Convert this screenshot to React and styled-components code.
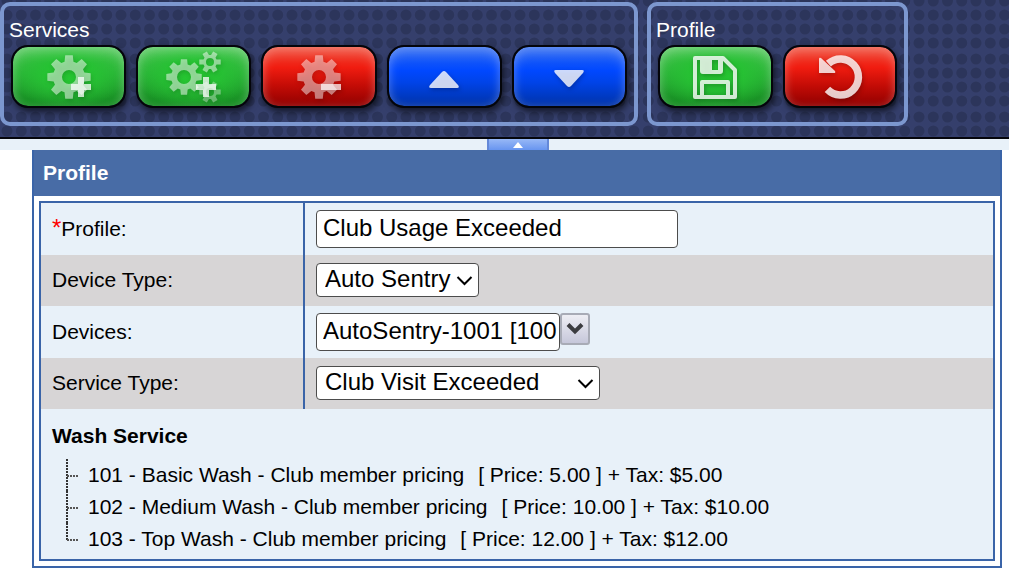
import React from "react";
import styled, { createGlobalStyle } from "styled-components";

const GlobalStyle = createGlobalStyle`
  * { box-sizing: border-box; }
  body {
    margin: 0;
    background: #fff;
    color: #000;
    font: 21px/24px "Liberation Sans", Arial, sans-serif;
  }
`;

const Toolbar = styled.header`
  position: relative;
  display: flex;
  align-items: flex-start;
  gap: 9px;
  height: 139px;
  padding-top: 2px;
  background: #353f6c;
  border-bottom: 2px solid #05060c;
  overflow: hidden;
`;

const Texture = styled.svg`
  position: absolute;
  inset: 0;
  width: 100%;
  height: 100%;
`;

const Group = styled.section`
  position: relative;
  width: ${(p) => p.$width};
  height: 124px;
  padding: 12px 7px 0 5px;
  border: 4px solid #7c97cf;
  border-radius: 10px;
`;

const GroupTitle = styled.h2`
  margin: 0;
  font-size: 21px;
  font-weight: 400;
  line-height: 24px;
  color: #fff;
`;

const Buttons = styled.div`
  display: grid;
  grid-template-columns: repeat(${(p) => p.$count}, 1fr);
  gap: 10px;
  margin-top: 3px;
  padding-left: 2px;
`;

const tones = {
  green: "radial-gradient(ellipse at 50% 45%, #25c630 0, #26c233 30%, transparent 75%), linear-gradient(#49c652, #2bb238 45%, #148a20)",
  red: "linear-gradient(#f04a36, #f01c10 35%, #c40c06 65%, #900000)",
  blue: "linear-gradient(#2c68f0, #0048ff 40%, #0043e8 60%, #0033a8)",
};

const ToolButton = styled.button`
  display: flex;
  align-items: center;
  justify-content: center;
  height: 63px;
  padding: 0;
  border: 2px solid #04050a;
  border-radius: 17px;
  background: ${(p) => tones[p.$tone]};
  background-clip: padding-box;
  background-color: #04050a;
  box-shadow: inset 0 6px 12px rgba(255, 255, 255, 0.22), inset 0 0 8px rgba(255, 255, 255, 0.14), 2px 4px 6px rgba(0, 0, 0, 0.6);
  cursor: pointer;
`;

const Icon = styled.svg`
  display: block;
  width: 60px;
  height: 56px;
  overflow: visible;
  filter: drop-shadow(1px 2px 2px rgba(0, 0, 0, 0.3));
`;

const Strip = styled.div`
  display: flex;
  justify-content: center;
  height: 11px;
  padding-left: 27px;
  background: #e8f1f9;
`;

const Handle = styled.button`
  display: flex;
  align-items: center;
  justify-content: center;
  width: 62px;
  height: 11px;
  padding: 0;
  border: solid #6488d8;
  border-width: 0 2px;
  background: linear-gradient(#98b8f6, #6895f0);
  cursor: pointer;
`;

const Panel = styled.section`
  margin: 0 7px 6px 32px;
  border: 2px solid #3a64a8;
  border-top: 0;
`;

const PanelTitle = styled.h1`
  margin: 0;
  padding: 11px 9px;
  background: #486ca6;
  color: #fff;
  font-size: 21px;
  font-weight: 700;
  line-height: 24px;
`;

const PanelBody = styled.div`
  margin: 5px;
  border: 2px solid #3a64a8;
  background: #e8f1f9;
`;

const Fields = styled.table`
  width: 100%;
  height: 206px;
  border-collapse: separate;
  border-spacing: 0;
`;

const FieldRow = styled.tr`
  height: 51px;
  background: #e8f1f9;
  &:nth-child(even) { background: #d7d5d6; }
`;

const FieldLabel = styled.th`
  width: 264px;
  padding: 0 11px;
  border-right: 2px solid #3a64a8;
  font-weight: 400;
  text-align: left;
`;

const Required = styled.span`
  color: #f00;
  font-size: 24px;
  line-height: 20px;
`;

const FieldCell = styled.td`
  padding: 0 11px;
`;

const Control = styled.div`
  position: relative;
  display: flex;
  align-items: flex-start;
  width: ${(p) => p.$width};
`;

const TextInput = styled.input`
  width: ${(p) => p.$width};
  height: 38px;
  padding: 0 0 2px 6px;
  border: 1px solid #4c4c4c;
  border-radius: 4px;
  background: #fff;
  color: #000;
  font: 24px/28px "Liberation Sans", Arial, sans-serif;
`;

const Select = styled.select`
  appearance: none;
  width: 100%;
  height: 34px;
  padding: 0 8px 2px;
  border: 1px solid #4c4c4c;
  border-radius: 4px;
  background: #fff;
  color: #000;
  font: 24px/28px "Liberation Sans", Arial, sans-serif;
`;

const Chevron = styled.svg`
  position: absolute;
  right: 6px;
  top: 12px;
  width: 17px;
  height: 11px;
  pointer-events: none;
`;

const PickerButton = styled.button`
  display: flex;
  align-items: center;
  justify-content: center;
  width: 30px;
  height: 32px;
  padding: 0;
  border: 2px solid #a8abb6;
  border-radius: 3px;
  background: linear-gradient(#eeeef4, #c6c7da);
  cursor: pointer;
`;

const Services = styled.section`
  padding: 15px 11px 4px;
`;

const ServicesTitle = styled.h2`
  margin: 0 0 11px;
  font-size: 21px;
  font-weight: 700;
  line-height: 24px;
`;

const Tree = styled.ul`
  margin: 0;
  padding: 0 0 0 13px;
  list-style: none;
`;

const TreeItem = styled.li`
  display: flex;
  align-items: center;
  height: 32px;
`;

const Branch = styled.svg`
  flex: none;
  width: 14px;
  height: 32px;
  margin-right: 9px;
`;

const ServiceName = styled.span`
  margin-right: 14px;
`;

function gearPath(cx, cy, outer, body, hole, teeth, start = 0) {
  const step = (Math.PI * 2) / teeth;
  const at = (r, a) => `${(cx + r * Math.cos(a)).toFixed(2)} ${(cy + r * Math.sin(a)).toFixed(2)}`;
  const points = [];
  for (let i = 0; i < teeth; i += 1) {
    const a = start + i * step;
    points.push(at(body, a - step * 0.36), at(outer, a - step * 0.22), at(outer, a + step * 0.22), at(body, a + step * 0.36));
  }
  return `M${points.join("L")}ZM${cx - hole} ${cy}a${hole} ${hole} 0 1 0 ${hole * 2} 0a${hole} ${hole} 0 1 0 ${-hole * 2} 0Z`;
}

const icons = {
  add: (
    <>
      <path d={gearPath(30, 28, 22, 16, 7, 8)} fill="#fff" fillOpacity=".5" fillRule="evenodd" />
      <path d="M39 28h6v7h7v6h-7v7h-6v-7h-7v-6h7z" fill="#fff" fillOpacity=".75" />
    </>
  ),
  addMany: (
    <>
      <path d={gearPath(20, 28, 18, 13, 7, 8)} fill="#fff" fillOpacity=".5" fillRule="evenodd" />
      <path d={gearPath(46, 13, 11, 7, 4, 6)} fill="#fff" fillOpacity=".5" fillRule="evenodd" />
      <path d={gearPath(46, 43, 11, 7, 4, 6)} fill="#fff" fillOpacity=".35" fillRule="evenodd" />
      <path d="M39 28h6v7h7v6h-7v7h-6v-7h-7v-6h7z" fill="#fff" fillOpacity=".75" />
    </>
  ),
  remove: (
    <>
      <path d={gearPath(30, 28, 22, 16, 7, 8)} fill="#fff" fillOpacity=".47" fillRule="evenodd" />
      <path d="M32 35h20v6h-20z" fill="#fff" fillOpacity=".72" />
    </>
  ),
  up: <path d="M28 23q2-2 4 0l12 13q2 3-1 3h-26q-3 0-1-3z" fill="#fff" fillOpacity=".8" />,
  down: <path d="M28 37q2 2 4 0l12-13q2-3-1-3h-26q-3 0-1 3z" fill="#fff" fillOpacity=".8" />,
  save: (
    <g fill="none" stroke="#fff" opacity=".8" strokeWidth="4" strokeLinejoin="round">
      <path d="M10 9h28l12 12v27H10z" />
      <path d="M17 47V33h26v14" />
      <path d="M15 10h23v12q0 3-3 3H18q-3 0-3-3zM27 11v10h6v-10z" fill="#fff" stroke="none" fillRule="evenodd" />
    </g>
  ),
  undo: (
    <g opacity=".8">
      <path d="M18.400 14.600A18 18 0 1 1 17.400 40.400" fill="none" stroke="#fff" strokeWidth="7.500" />
      <path d="M9 10q0-2 2-1l14 13q1 2-1 2H9z" fill="#fff" />
    </g>
  ),
};

const serviceActions = [
  { label: "Add service", tone: "green", icon: "add" },
  { label: "Add multiple services", tone: "green", icon: "addMany" },
  { label: "Remove service", tone: "red", icon: "remove" },
  { label: "Move up", tone: "blue", icon: "up" },
  { label: "Move down", tone: "blue", icon: "down" },
];

const profileActions = [
  { label: "Save", tone: "green", icon: "save" },
  { label: "Undo", tone: "red", icon: "undo" },
];

const services = [
  ["101 - Basic Wash - Club member pricing", "[ Price: 5.00 ] + Tax: $5.00"],
  ["102 - Medium Wash - Club member pricing", "[ Price: 10.00 ] + Tax: $10.00"],
  ["103 - Top Wash - Club member pricing", "[ Price: 12.00 ] + Tax: $12.00"],
];

function ToolGroup({ title, actions, width }) {
  return (
    <Group $width={width}>
      <GroupTitle>{title}</GroupTitle>
      <Buttons $count={actions.length}>
        {actions.map((a) => (
          <ToolButton key={a.label} type="button" $tone={a.tone} aria-label={a.label}>
            <Icon viewBox="0 0 60 56" aria-hidden="true">{icons[a.icon]}</Icon>
          </ToolButton>
        ))}
      </Buttons>
    </Group>
  );
}

function SelectField({ id, width, value }) {
  return (
    <Control $width={width}>
      <Select id={id} defaultValue={value}>
        <option>{value}</option>
      </Select>
      <Chevron viewBox="0 0 17 11" aria-hidden="true">
        <path d="M1.500 2l7 7 7-7" fill="none" stroke="#000" strokeWidth="2" />
      </Chevron>
    </Control>
  );
}

export default function App() {
  return (
    <>
      <GlobalStyle />
      <Toolbar>
        <Texture aria-hidden="true">
          <defs>
            <pattern id="dots" width="57" height="58" patternUnits="userSpaceOnUse">
              {[1, 15, 29, 43, 59].map((y) =>
                [7, 21.25, 35.5, 49.75].map((x) => <circle key={`${x}-${y}`} cx={x} cy={y} r="5.500" fill="#2c355b" />)
              )}
            </pattern>
          </defs>
          <rect width="100%" height="100%" fill="url(#dots)" />
        </Texture>
        <ToolGroup title="Services" actions={serviceActions} width="638px" />
        <ToolGroup title="Profile" actions={profileActions} width="261px" />
      </Toolbar>
      <Strip>
        <Handle type="button" aria-label="Collapse toolbar">
          <svg width="10" height="6" viewBox="0 0 10 6" aria-hidden="true">
            <path d="M5 0l5 6H0z" fill="#fff" />
          </svg>
        </Handle>
      </Strip>
      <Panel>
        <PanelTitle>Profile</PanelTitle>
        <PanelBody>
          <Fields>
            <tbody>
              <FieldRow>
                <FieldLabel scope="row"><label htmlFor="profile"><Required>*</Required>Profile:</label></FieldLabel>
                <FieldCell><Control><TextInput id="profile" $width="362px" defaultValue="Club Usage Exceeded" /></Control></FieldCell>
              </FieldRow>
              <FieldRow>
                <FieldLabel scope="row"><label htmlFor="device-type">Device Type:</label></FieldLabel>
                <FieldCell><SelectField id="device-type" width="163px" value="Auto Sentry" /></FieldCell>
              </FieldRow>
              <FieldRow>
                <FieldLabel scope="row"><label htmlFor="devices">Devices:</label></FieldLabel>
                <FieldCell>
                  <Control>
                    <TextInput id="devices" $width="244px" defaultValue="AutoSentry-1001 [100" />
                    <PickerButton type="button" aria-label="Choose devices">
                      <svg width="18" height="13" viewBox="0 0 18 13" aria-hidden="true">
                        <path d="M2 2.500l7 7 7-7" fill="none" stroke="#3c3c40" strokeWidth="4" />
                      </svg>
                    </PickerButton>
                  </Control>
                </FieldCell>
              </FieldRow>
              <FieldRow>
                <FieldLabel scope="row"><label htmlFor="service-type">Service Type:</label></FieldLabel>
                <FieldCell><SelectField id="service-type" width="284px" value="Club Visit Exceeded" /></FieldCell>
              </FieldRow>
            </tbody>
          </Fields>
          <Services>
            <ServicesTitle>Wash Service</ServicesTitle>
            <Tree>
              {services.map(([name, price], i) => (
                <TreeItem key={name}>
                  <Branch viewBox="0 0 14 32" aria-hidden="true">
                    <path d={i === services.length - 1 ? "M2 0v17" : "M2 0v32"} stroke="#333" strokeWidth="2" strokeDasharray="2 1" />
                    <path d="M2 17h12" stroke="#555" strokeWidth="2" strokeDasharray="2 1" />
                  </Branch>
                  <ServiceName>{name}</ServiceName>
                  <span>{price}</span>
                </TreeItem>
              ))}
            </Tree>
          </Services>
        </PanelBody>
      </Panel>
    </>
  );
}
